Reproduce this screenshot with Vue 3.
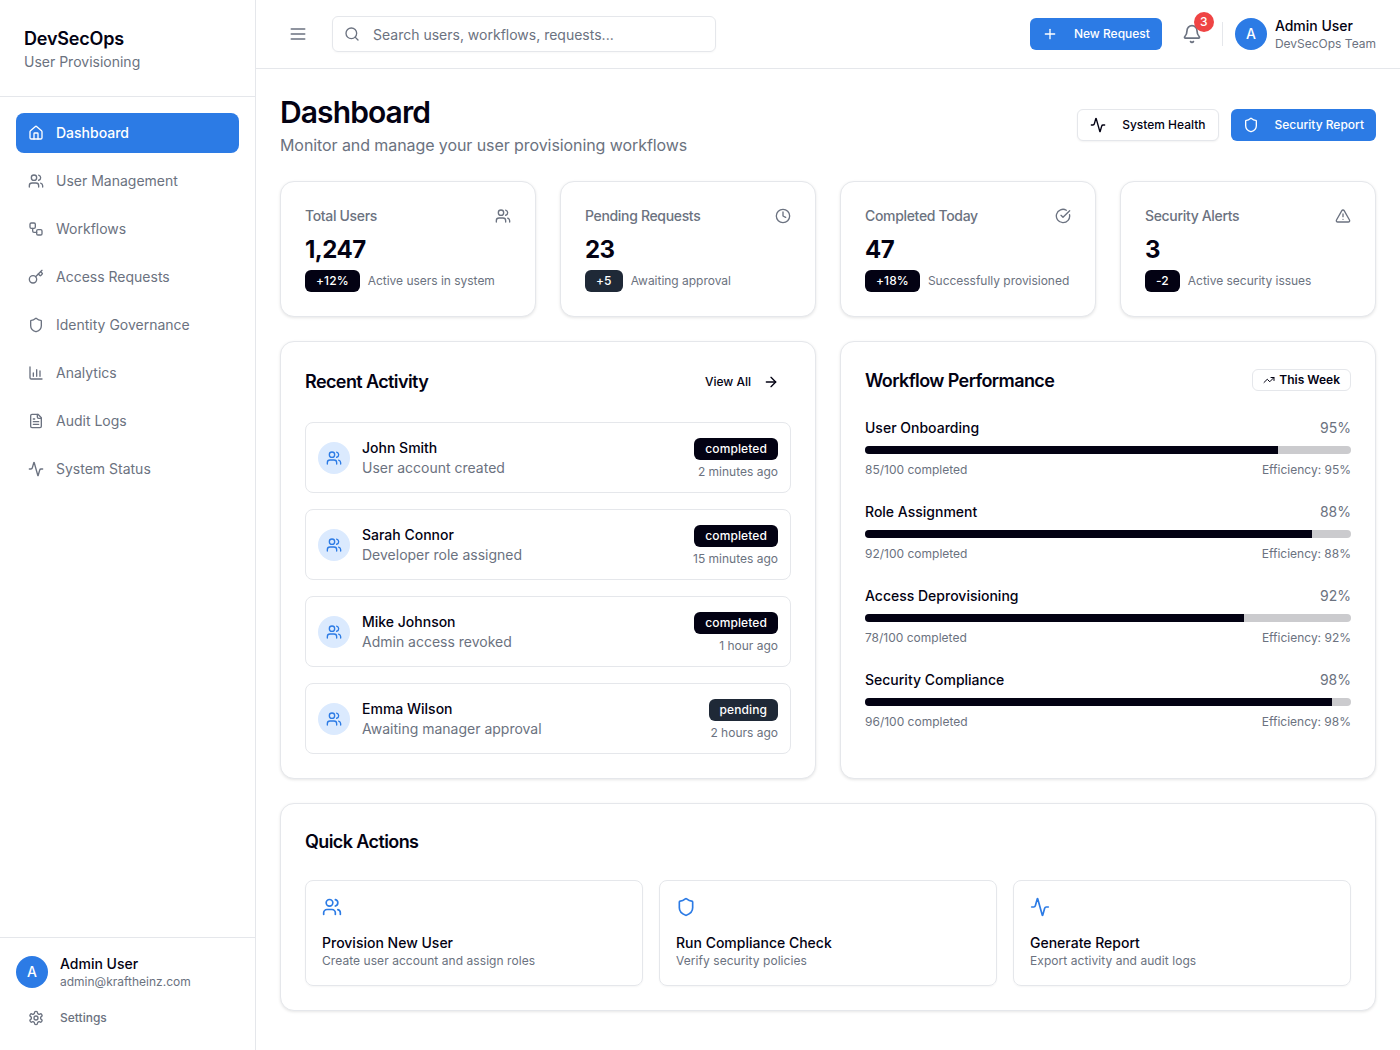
<script setup>
import { h } from 'vue'

// lucide style icons, strings are path data
const icons = {
  home: ['M15 21v-8a1 1 0 0 0-1-1h-4a1 1 0 0 0-1 1v8', 'M3 10a2 2 0 0 1 .709-1.528l7-5.999a2 2 0 0 1 2.582 0l7 5.999A2 2 0 0 1 21 10v9a2 2 0 0 1-2 2H5a2 2 0 0 1-2-2z'],
  users: ['M16 21v-2a4 4 0 0 0-4-4H6a4 4 0 0 0-4 4v2', { tag: 'circle', cx: 9, cy: 7, r: 4 }, 'M22 21v-2a4 4 0 0 0-3-3.87', 'M16 3.13a4 4 0 0 1 0 7.75'],
  workflow: [{ tag: 'rect', x: 3, y: 3, width: 8, height: 8, rx: 2 }, 'M7 11v4a2 2 0 0 0 2 2h4', { tag: 'rect', x: 13, y: 13, width: 8, height: 8, rx: 2 }],
  key: ['m15.5 7.5 2.3 2.3a1 1 0 0 0 1.4 0l2.1-2.1a1 1 0 0 0 0-1.4L19 4', 'm21 2-9.6 9.6', { tag: 'circle', cx: 7.5, cy: 15.5, r: 5.5 }],
  shield: ['M20 13c0 5-3.5 7.5-7.66 8.95a1 1 0 0 1-.67-.01C7.5 20.5 4 18 4 13V6a1 1 0 0 1 1-1c2 0 4.5-1.2 6.24-2.72a1.17 1.17 0 0 1 1.52 0C14.51 3.81 17 5 19 5a1 1 0 0 1 1 1z'],
  chart: ['M3 3v16a2 2 0 0 0 2 2h16', 'M8 17v-5', 'M13 17V7', 'M18 17v-8'],
  file: ['M15 2H6a2 2 0 0 0-2 2v16a2 2 0 0 0 2 2h12a2 2 0 0 0 2-2V7Z', 'M14 2v4a2 2 0 0 0 2 2h4', 'M10 9H8', 'M16 13H8', 'M16 17H8'],
  activity: ['M22 12h-2.48a2 2 0 0 0-1.93 1.46l-2.35 8.36a.25.25 0 0 1-.48 0L9.24 2.18a.25.25 0 0 0-.48 0l-2.35 8.36A2 2 0 0 1 4.49 12H2'],
  settings: ['M12.22 2h-.44a2 2 0 0 0-2 2v.18a2 2 0 0 1-1 1.73l-.43.25a2 2 0 0 1-2 0l-.15-.08a2 2 0 0 0-2.73.73l-.22.38a2 2 0 0 0 .73 2.73l.15.1a2 2 0 0 1 1 1.72v.51a2 2 0 0 1-1 1.74l-.15.09a2 2 0 0 0-.73 2.73l.22.38a2 2 0 0 0 2.73.73l.15-.08a2 2 0 0 1 2 0l.43.25a2 2 0 0 1 1 1.73V20a2 2 0 0 0 2 2h.44a2 2 0 0 0 2-2v-.18a2 2 0 0 1 1-1.73l.43-.25a2 2 0 0 1 2 0l.15.08a2 2 0 0 0 2.73-.73l.22-.39a2 2 0 0 0-.73-2.73l-.15-.08a2 2 0 0 1-1-1.74v-.5a2 2 0 0 1 1-1.74l.15-.09a2 2 0 0 0 .73-2.73l-.22-.38a2 2 0 0 0-2.73-.73l-.15.08a2 2 0 0 1-2 0l-.43-.25a2 2 0 0 1-1-1.73V4a2 2 0 0 0-2-2z', { tag: 'circle', cx: 12, cy: 12, r: 3 }],
  menu: ['M4 12h16', 'M4 18h16', 'M4 6h16'],
  search: ['m21 21-4.34-4.34', { tag: 'circle', cx: 11, cy: 11, r: 8 }],
  plus: ['M5 12h14', 'M12 5v14'],
  bell: ['M10.268 21a2 2 0 0 0 3.464 0', 'M3.262 15.326A1 1 0 0 0 4 17h16a1 1 0 0 0 .74-1.673C19.41 13.956 18 12.499 18 8A6 6 0 0 0 6 8c0 4.499-1.411 5.956-2.738 7.326'],
  clock: [{ tag: 'circle', cx: 12, cy: 12, r: 10 }, 'M12 6v6l4 2'],
  check: ['M21.801 10A10 10 0 1 1 17 3.335', 'm9 11 3 3L22 4'],
  alert: ['m21.73 18-8-14a2 2 0 0 0-3.48 0l-8 14A2 2 0 0 0 4 21h16a2 2 0 0 0 1.73-3', 'M12 9v4', 'M12 17h.01'],
  arrow: ['M5 12h14', 'm12 5 7 7-7 7'],
  trend: ['M16 7h6v6', 'm22 7-8.5 8.5-5-5L2 17']
}

const Icon = (props) =>
  h(
    'svg',
    {
      width: props.size || 16,
      height: props.size || 16,
      viewBox: '0 0 24 24',
      fill: 'none',
      stroke: 'currentColor',
      'stroke-width': 2,
      'stroke-linecap': 'round',
      'stroke-linejoin': 'round'
    },
    icons[props.name].map((el) => {
      if (typeof el === 'string') return h('path', { d: el })
      const { tag, ...attrs } = el
      return h(tag, attrs)
    })
  )
Icon.props = ['name', 'size']

const navItems = [
  { label: 'Dashboard', icon: 'home', active: true },
  { label: 'User Management', icon: 'users' },
  { label: 'Workflows', icon: 'workflow' },
  { label: 'Access Requests', icon: 'key' },
  { label: 'Identity Governance', icon: 'shield' },
  { label: 'Analytics', icon: 'chart' },
  { label: 'Audit Logs', icon: 'file' },
  { label: 'System Status', icon: 'activity' }
]

const stats = [
  { label: 'Total Users', icon: 'users', value: '1,247', badge: '+12%', note: 'Active users in system' },
  { label: 'Pending Requests', icon: 'clock', value: '23', badge: '+5', note: 'Awaiting approval', soft: true },
  { label: 'Completed Today', icon: 'check', value: '47', badge: '+18%', note: 'Successfully provisioned' },
  { label: 'Security Alerts', icon: 'alert', value: '3', badge: '-2', note: 'Active security issues' }
]

const activity = [
  { name: 'John Smith', action: 'User account created', status: 'completed', time: '2 minutes ago' },
  { name: 'Sarah Connor', action: 'Developer role assigned', status: 'completed', time: '15 minutes ago' },
  { name: 'Mike Johnson', action: 'Admin access revoked', status: 'completed', time: '1 hour ago' },
  { name: 'Emma Wilson', action: 'Awaiting manager approval', status: 'pending', time: '2 hours ago' }
]

const workflows = [
  { name: 'User Onboarding', done: 85, eff: 95 },
  { name: 'Role Assignment', done: 92, eff: 88 },
  { name: 'Access Deprovisioning', done: 78, eff: 92 },
  { name: 'Security Compliance', done: 96, eff: 98 }
]

const actions = [
  { title: 'Provision New User', desc: 'Create user account and assign roles', icon: 'users' },
  { title: 'Run Compliance Check', desc: 'Verify security policies', icon: 'shield' },
  { title: 'Generate Report', desc: 'Export activity and audit logs', icon: 'activity' }
]
</script>

<template>
  <div class="app">
    <!-- 侧边栏 -->
    <aside class="sidebar">
      <div class="brand">
        <div class="brand-name">DevSecOps</div>
        <div class="brand-sub">User Provisioning</div>
      </div>
      <nav class="nav">
        <a v-for="item in navItems" :key="item.label" class="nav-item" :class="{ active: item.active }">
          <Icon :name="item.icon" />
          <span>{{ item.label }}</span>
        </a>
      </nav>
      <div class="side-foot">
        <div class="side-user">
          <div class="avatar">A</div>
          <div>
            <div class="side-user-name">Admin User</div>
            <div class="side-user-mail">admin@kraftheinz.com</div>
          </div>
        </div>
        <a class="settings">
          <Icon name="settings" />
          <span>Settings</span>
        </a>
      </div>
    </aside>

    <div class="content">
      <!-- 顶栏 -->
      <header class="topbar">
        <button class="menu-btn"><Icon name="menu" :size="20" /></button>
        <div class="search">
          <Icon name="search" />
          <span class="search-text">Search users, workflows, requests...</span>
        </div>
        <div class="top-right">
          <button class="btn primary"><Icon name="plus" /><span>New Request</span></button>
          <div class="bell">
            <Icon name="bell" :size="20" />
            <span class="bell-count">3</span>
          </div>
          <div class="top-sep"></div>
          <div class="top-user">
            <div class="avatar">A</div>
            <div>
              <div class="top-user-name">Admin User</div>
              <div class="top-user-team">DevSecOps Team</div>
            </div>
          </div>
        </div>
      </header>

      <main class="main">
        <div class="page-head">
          <div>
            <h1>Dashboard</h1>
            <p>Monitor and manage your user provisioning workflows</p>
          </div>
          <div class="page-actions">
            <button class="btn outline"><Icon name="activity" /><span>System Health</span></button>
            <button class="btn primary"><Icon name="shield" /><span>Security Report</span></button>
          </div>
        </div>

        <!-- 统计卡片 -->
        <section class="stats">
          <div v-for="s in stats" :key="s.label" class="card stat">
            <div class="stat-top">
              <span>{{ s.label }}</span>
              <Icon :name="s.icon" />
            </div>
            <div class="stat-value">{{ s.value }}</div>
            <div class="stat-foot">
              <span class="badge" :class="{ soft: s.soft }">{{ s.badge }}</span>
              <span class="stat-note">{{ s.note }}</span>
            </div>
          </div>
        </section>

        <section class="columns">
          <div class="card panel">
            <div class="panel-head">
              <h2>Recent Activity</h2>
              <button class="view-all"><span>View All</span><Icon name="arrow" /></button>
            </div>
            <div class="activity">
              <div v-for="a in activity" :key="a.name" class="activity-row">
                <div class="activity-icon"><Icon name="users" /></div>
                <div class="activity-text">
                  <div class="activity-name">{{ a.name }}</div>
                  <div class="activity-action">{{ a.action }}</div>
                </div>
                <div class="activity-meta">
                  <span class="badge" :class="{ soft: a.status === 'pending' }">{{ a.status }}</span>
                  <span class="activity-time">{{ a.time }}</span>
                </div>
              </div>
            </div>
          </div>

          <div class="card panel">
            <div class="panel-head perf-head">
              <h2>Workflow Performance</h2>
              <span class="week"><Icon name="trend" :size="12" />This Week</span>
            </div>
            <div class="perf">
              <div v-for="w in workflows" :key="w.name" class="perf-row">
                <div class="perf-top">
                  <span class="perf-name">{{ w.name }}</span>
                  <span class="perf-pct">{{ w.eff }}%</span>
                </div>
                <div class="bar"><div class="bar-fill" :style="{ width: w.done + '%' }"></div></div>
                <div class="perf-foot">
                  <span>{{ w.done }}/100 completed</span>
                  <span>Efficiency: {{ w.eff }}%</span>
                </div>
              </div>
            </div>
          </div>
        </section>

        <section class="card quick">
          <h2>Quick Actions</h2>
          <div class="quick-grid">
            <div v-for="q in actions" :key="q.title" class="quick-item">
              <div class="quick-icon"><Icon :name="q.icon" :size="20" /></div>
              <div class="quick-title">{{ q.title }}</div>
              <div class="quick-desc">{{ q.desc }}</div>
            </div>
          </div>
        </section>
      </main>
    </div>
  </div>
</template>

<style scoped>
.app {
  display: flex;
  min-height: 1050px;
  background: #fff;
  color: #030213;
  font-family: Inter, "Noto Sans", sans-serif;
  font-size: 14px;
  line-height: 20px;
}

.sidebar {
  width: 256px;
  flex-shrink: 0;
  box-sizing: border-box;
  border-right: 1px solid #e5e7eb;
  display: flex;
  flex-direction: column;
}

.brand {
  height: 97px;
  box-sizing: border-box;
  padding: 25px 24px 0;
  border-bottom: 1px solid #e5e7eb;
}

.brand-name {
  font-size: 18px;
  line-height: 27px;
  font-weight: 600;
  letter-spacing: -0.2px;
}

.brand-sub {
  color: #6b7280;
  line-height: 20px;
}

.nav {
  flex: 1;
  padding: 16px;
  display: flex;
  flex-direction: column;
  gap: 8px;
}

.nav-item {
  height: 40px;
  display: flex;
  align-items: center;
  gap: 12px;
  padding: 0 12px;
  border-radius: 8px;
  color: #6b7280;
  font-weight: 400;
}

.nav-item span {
  margin-top: -1px;
}

.nav-item.active {
  background: #2c7be5;
  color: #fff;
  font-weight: 500;
}

.side-foot {
  height: 113px;
  box-sizing: border-box;
  border-top: 1px solid #e5e7eb;
  padding: 16px 16px 0;
}

.side-user {
  display: flex;
  align-items: center;
  gap: 12px;
}

.avatar {
  width: 32px;
  height: 32px;
  border-radius: 50%;
  background: #2c7be5;
  color: #fff;
  font-weight: 500;
  display: flex;
  align-items: center;
  justify-content: center;
  flex-shrink: 0;
}

.side-user-name {
  font-weight: 500;
  line-height: 20px;
}

.side-user-mail {
  font-size: 12px;
  line-height: 16px;
  color: #6b7280;
}

.settings {
  display: flex;
  align-items: center;
  gap: 16px;
  height: 32px;
  margin-top: 12px;
  padding-left: 12px;
  font-size: 12px;
  font-weight: 500;
  color: #6b7280;
}

.content {
  flex: 1;
  min-width: 0;
}

.topbar {
  height: 69px;
  box-sizing: border-box;
  border-bottom: 1px solid #e5e7eb;
  padding: 0 24px;
  display: flex;
  align-items: center;
}

.menu-btn {
  width: 36px;
  height: 36px;
  margin-right: 16px;
  padding: 0;
  border: 0;
  background: none;
  color: #6b7280;
  display: flex;
  align-items: center;
  justify-content: center;
}

.search {
  width: 384px;
  height: 36px;
  box-sizing: border-box;
  border: 1px solid #e5e7eb;
  border-radius: 6px;
  padding: 0 11px;
  display: flex;
  align-items: center;
  gap: 13px;
  color: #6b7280;
  box-shadow: 0 1px 2px rgba(0, 0, 0, 0.03);
}

.search-text {
  margin-top: 2px;
}

.top-right {
  margin-left: auto;
  display: flex;
  align-items: center;
}

.btn {
  height: 32px;
  box-sizing: border-box;
  padding: 0 12px;
  border-radius: 6px;
  display: flex;
  align-items: center;
  gap: 16px;
  font-family: inherit;
  font-size: 12px;
  line-height: 16px;
  font-weight: 500;
}

.btn.primary {
  border: 0;
  background: #2c7be5;
  color: #fff;
}

.btn.outline {
  border: 1px solid #e5e7eb;
  background: #fff;
  color: #030213;
  box-shadow: 0 1px 2px rgba(0, 0, 0, 0.05);
}

.bell {
  position: relative;
  width: 20px;
  height: 20px;
  margin-left: 20px;
  color: #6b7280;
}

.bell-count {
  position: absolute;
  top: -12px;
  left: 12px;
  width: 20px;
  height: 20px;
  border-radius: 50%;
  background: #ef4444;
  color: #fff;
  font-size: 12px;
  font-weight: 500;
  display: flex;
  align-items: center;
  justify-content: center;
}

.top-sep {
  width: 1px;
  height: 24px;
  background: #e5e7eb;
  margin: 0 12px 0 20px;
}

.top-user {
  display: flex;
  align-items: center;
  gap: 8px;
}

.top-user-name {
  font-weight: 500;
  line-height: 20px;
}

.top-user-team {
  font-size: 12px;
  line-height: 16px;
  color: #6b7280;
}

.main {
  padding: 24px;
  display: flex;
  flex-direction: column;
  gap: 24px;
}

.page-head {
  display: flex;
  align-items: center;
  justify-content: space-between;
  height: 64px;
}

h1 {
  margin: 1px 0 0;
  font-size: 30px;
  line-height: 36px;
  font-weight: 600;
  letter-spacing: -0.9px;
}

.page-head p {
  margin: 3px 0 0;
  font-size: 16px;
  line-height: 24px;
  letter-spacing: -0.08px;
  color: #6b7280;
}

.page-actions {
  display: flex;
  gap: 12px;
}

.card {
  box-sizing: border-box;
  border: 1px solid #e5e7eb;
  border-radius: 14px;
  background: #fff;
  box-shadow: 0 1px 3px rgba(0, 0, 0, 0.1);
}

.stats {
  display: grid;
  grid-template-columns: repeat(4, 1fr);
  gap: 24px;
}

.stat {
  height: 136px;
  padding: 24px;
}

.stat-top {
  display: flex;
  align-items: center;
  justify-content: space-between;
  height: 20px;
  font-weight: 500;
  letter-spacing: -0.33px;
  color: #6b7280;
}

.stat-value {
  margin-top: 8px;
  font-size: 24px;
  line-height: 32px;
  font-weight: 700;
  letter-spacing: -0.5px;
}

.stat-foot {
  margin-top: 4px;
  display: flex;
  align-items: center;
  gap: 8px;
  font-size: 12px;
  color: #6b7280;
}

.stat-note {
  white-space: nowrap;
  letter-spacing: -0.02px;
}

.badge {
  display: inline-flex;
  align-items: center;
  height: 22px;
  box-sizing: border-box;
  padding: 0 11px;
  border-radius: 6px;
  background: #030213;
  color: #fff;
  font-size: 12px;
  font-weight: 500;
  letter-spacing: 0.1px;
}

.badge.soft {
  background: #1f2937;
}

.columns {
  display: grid;
  grid-template-columns: 1fr 1fr;
  gap: 24px;
}

.panel {
  height: 438px;
  padding: 24px;
}

.panel-head {
  display: flex;
  align-items: center;
  justify-content: space-between;
  height: 32px;
  margin-bottom: 24px;
}

h2 {
  margin: 0;
  font-size: 18px;
  line-height: 28px;
  font-weight: 600;
  letter-spacing: -0.6px;
}

.view-all {
  height: 32px;
  padding: 0 12px;
  border: 0;
  background: none;
  color: #030213;
  display: flex;
  align-items: center;
  gap: 12px;
  font-family: inherit;
  font-size: 12px;
  line-height: 16px;
  font-weight: 500;
}

.btn span,
.view-all span {
  margin-top: -1px;
}

.activity {
  display: flex;
  flex-direction: column;
  gap: 16px;
}

.activity-row {
  height: 71px;
  box-sizing: border-box;
  border: 1px solid #e5e7eb;
  border-radius: 8px;
  padding: 0 12px;
  display: flex;
  align-items: center;
  gap: 12px;
}

.activity-icon {
  width: 32px;
  height: 32px;
  border-radius: 50%;
  background: #dbeafe;
  color: #2c7be5;
  display: flex;
  align-items: center;
  justify-content: center;
}

.activity-text {
  flex: 1;
}

.activity-name {
  font-weight: 500;
  line-height: 20px;
}

.activity-action {
  line-height: 20px;
  color: #6b7280;
}

.activity-meta {
  margin-top: 2px;
  display: flex;
  flex-direction: column;
  align-items: flex-end;
  gap: 4px;
}

.activity-time {
  font-size: 12px;
  line-height: 16px;
  color: #6b7280;
}

.perf-head {
  height: 28px;
  margin-bottom: 24px;
}

.perf-head h2 {
  margin-top: 2px;
}

.week {
  height: 22px;
  box-sizing: border-box;
  border: 1px solid #e5e7eb;
  border-radius: 6px;
  padding: 0 10px;
  display: flex;
  align-items: center;
  gap: 4px;
  font-size: 12px;
  font-weight: 600;
}

.perf {
  display: flex;
  flex-direction: column;
  gap: 24px;
}

.perf-row {
  display: flex;
  flex-direction: column;
  gap: 8px;
}

.perf-top,
.perf-foot {
  display: flex;
  justify-content: space-between;
}

.perf-top {
  line-height: 20px;
}

.perf-name {
  font-weight: 500;
}

.perf-pct {
  color: #6b7280;
}

.bar {
  height: 8px;
  border-radius: 4px;
  background: #cbcbce;
  overflow: hidden;
}

.bar-fill {
  height: 100%;
  background: #030213;
}

.perf-foot {
  font-size: 12px;
  line-height: 16px;
  color: #6b7280;
}

.quick {
  height: 208px;
  padding: 24px;
}

.quick-grid {
  display: grid;
  grid-template-columns: repeat(3, 1fr);
  gap: 16px;
  margin-top: 24px;
}

.quick-item {
  height: 106px;
  box-sizing: border-box;
  border: 1px solid #e5e7eb;
  border-radius: 8px;
  padding: 16px;
  box-shadow: 0 1px 2px rgba(0, 0, 0, 0.04);
}

.quick-icon {
  display: flex;
  color: #2c7be5;
}

.quick-title {
  margin-top: 16px;
  font-weight: 500;
  line-height: 20px;
}

.quick-desc {
  font-size: 12px;
  line-height: 16px;
  letter-spacing: 0.06px;
  color: #6b7280;
}
</style>
